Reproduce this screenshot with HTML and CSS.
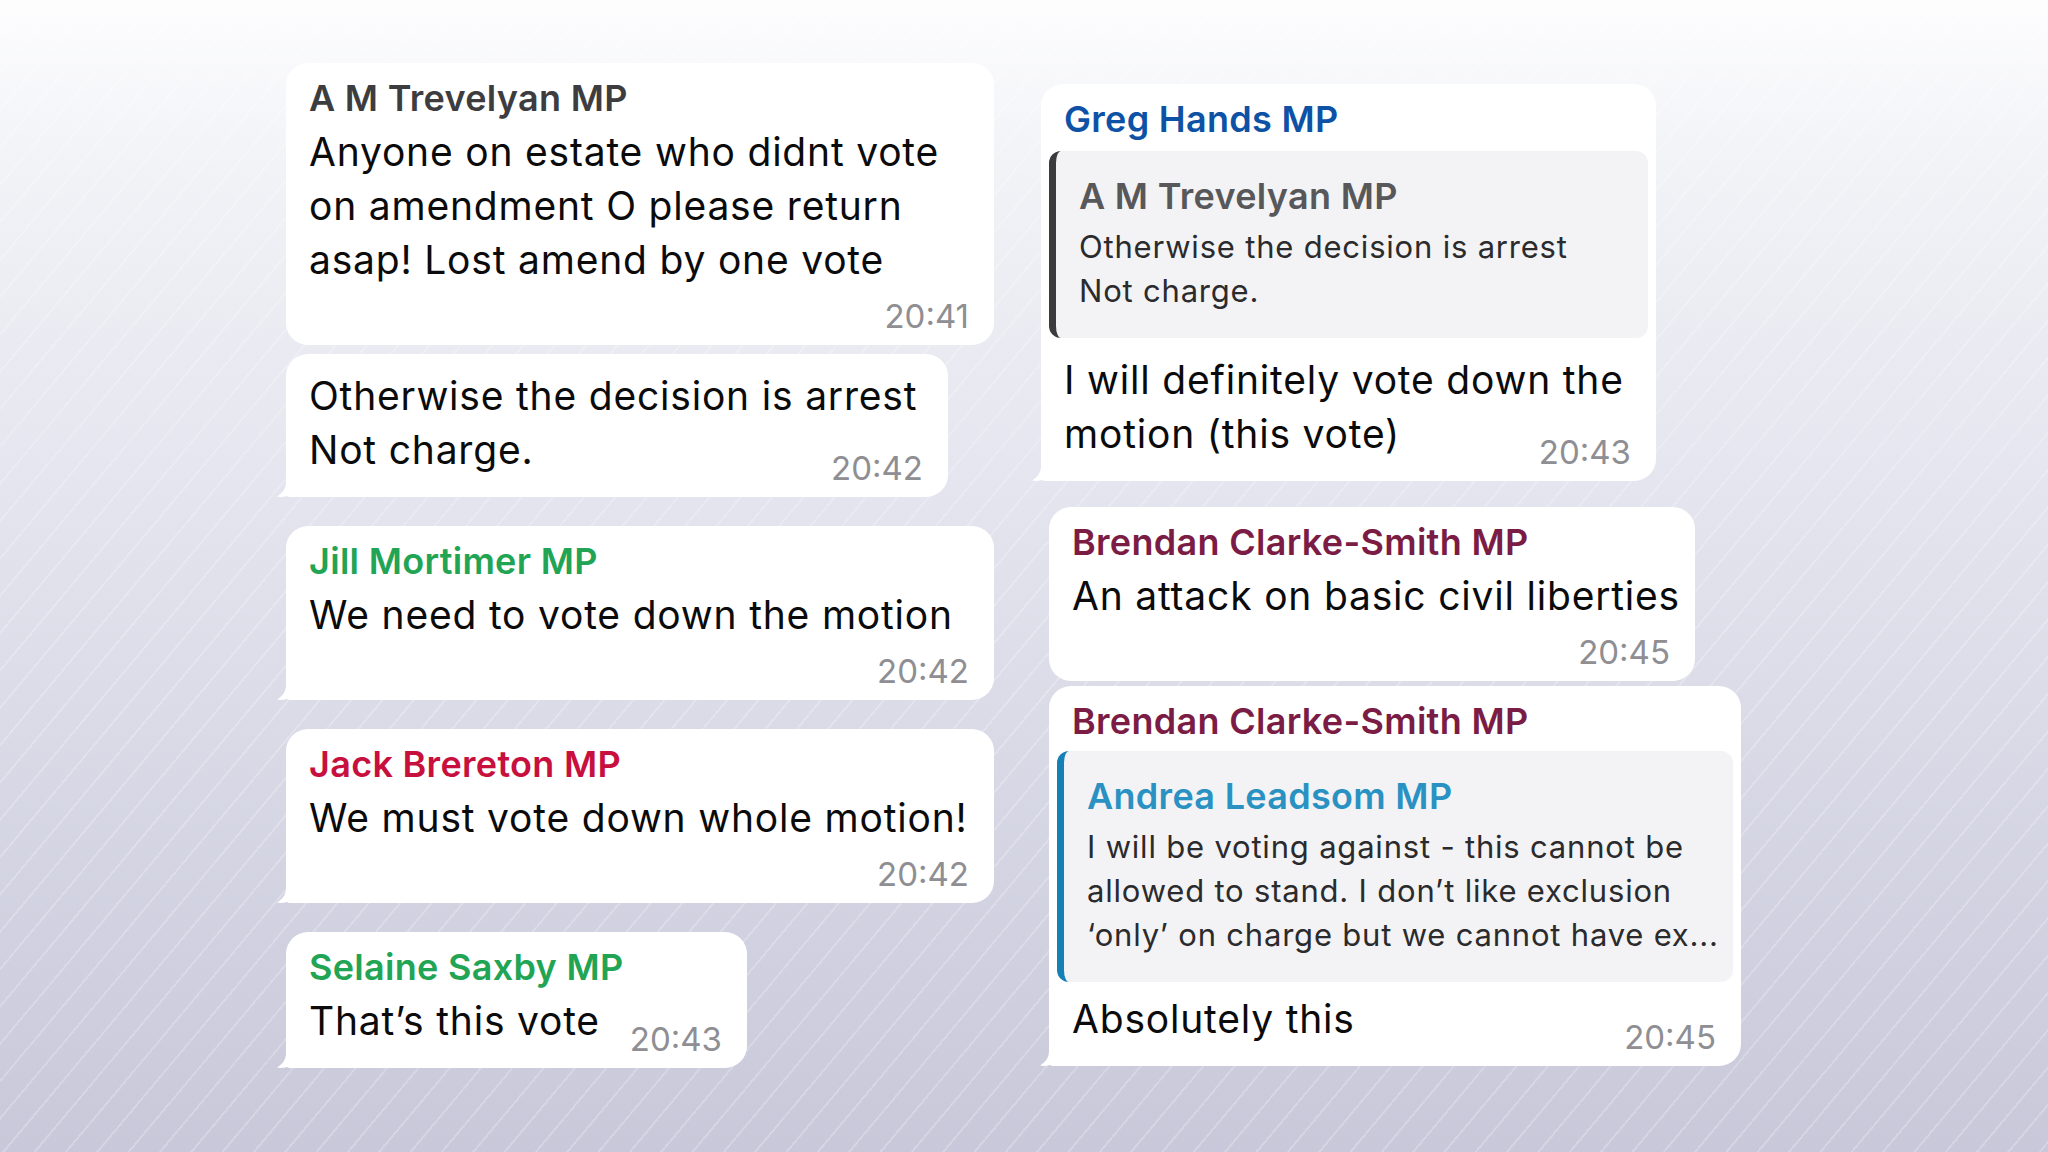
FILE: index.html
```html
<!DOCTYPE html>
<html lang="en">

<head>
    <meta charset="UTF-8">
    <meta name="viewport" content="width=device-width, initial-scale=1.0">
    <title>Group chat</title>
    <link rel="stylesheet" href="styles.css">
</head>

<body>
    <main class="chat">
        <section class="col col-left">
            <div class="bubble b-wide">
                <div class="name grey">A M Trevelyan MP</div>
                <div class="text">Anyone on estate who didnt vote<br>on amendment O please return<br>asap! Lost amend by one vote</div>
                <div class="time">20:41</div>
            </div>
            <div class="bubble b-mid tail">
                <div class="msg">
                    <div class="text">Otherwise the decision is arrest<br>Not charge.</div>
                    <div class="time">20:42</div>
                </div>
            </div>
            <div class="bubble b-wide tail gap">
                <div class="name green">Jill Mortimer MP</div>
                <div class="text">We need to vote down the motion</div>
                <div class="time">20:42</div>
            </div>
            <div class="bubble b-wide tail gap">
                <div class="name red">Jack Brereton MP</div>
                <div class="text">We must vote down whole motion!</div>
                <div class="time">20:42</div>
            </div>
            <div class="bubble b-small tail gap">
                <div class="name green">Selaine Saxby MP</div>
                <div class="msg">
                    <div class="text">That’s this vote</div>
                    <div class="time">20:43</div>
                </div>
            </div>
        </section>

        <section class="col col-right">
            <div class="bubble b-greg tail">
                <div class="name blue">Greg Hands MP</div>
                <div class="quote">
                    <div class="name grey-light">A M Trevelyan MP</div>
                    <div class="quote-text">Otherwise the decision is arrest<br>Not charge.</div>
                </div>
                <div class="msg">
                    <div class="text">I will definitely vote down the<br>motion (this vote)</div>
                    <div class="time">20:43</div>
                </div>
            </div>
            <div class="bubble b-brendan">
                <div class="name maroon">Brendan Clarke-Smith MP</div>
                <div class="text">An attack on basic civil liberties</div>
                <div class="time">20:45</div>
            </div>
            <div class="bubble b-brendan-2 tail">
                <div class="name maroon">Brendan Clarke-Smith MP</div>
                <div class="quote quote-blue">
                    <div class="name sky">Andrea Leadsom MP</div>
                    <div class="quote-text">I will be voting against - this cannot be<br>allowed to stand. I don’t like exclusion<br>‘only’ on charge but we cannot have ex...</div>
                </div>
                <div class="msg">
                    <div class="text">Absolutely this</div>
                    <div class="time">20:45</div>
                </div>
            </div>
        </section>
    </main>
</body>

</html>
```

FILE: styles.css
```css
body {
    margin: 0;
    width: 2048px;
    height: 1152px;
    overflow: hidden;
    font-family: Inter, "Liberation Sans", sans-serif;
    color: #0b0b0b;
    background:
        repeating-linear-gradient(130deg, transparent 0 22px, rgba(255, 255, 255, 0.22) 22px 24px),
        linear-gradient(180deg, #fdfdfe 0%, #f2f3f7 14%, #e4e5ee 42%, #d6d7e4 70%, #c8c8da 100%);
}
.chat {
    display: flex;
    align-items: flex-start;
    gap: 47px;
    padding: 63px 0 0 286px;
}
.col {
    display: flex;
    flex-direction: column;
    align-items: flex-start;
}
.col-right {
    padding-top: 21px;
}
.bubble {
    position: relative;
    box-sizing: border-box;
    background: #fff;
    border-radius: 22px;
    padding: 15px 25px 9px 23px;
}
.bubble.tail {
    border-bottom-left-radius: 4px;
}
.bubble.tail::before {
    content: "";
    position: absolute;
    left: -9px;
    bottom: 0;
    width: 20px;
    height: 24px;
    background: #fff;
    clip-path: path("M9 0 V9 C9 15 6 20 0 23.5 C5 24.5 10 23.5 13.5 21.5 C15.5 23 18 24 20 24 V0 Z");
}
.gap {
    margin-top: 29px;
}
.b-wide { width: 708px; }
.b-mid { width: 662px; margin-top: 9px; }
.b-small { width: 461px; }
.b-greg { width: 615px; }
.b-brendan { width: 646px; margin-left: 8px; margin-top: 26px; }
.b-brendan-2 { width: 692px; margin-left: 8px; margin-top: 5px; }

.name {
    font-size: 36px;
    font-weight: 600;
    line-height: 40px;
    letter-spacing: 0.3px;
    margin-bottom: 7px;
    white-space: nowrap;
}
.grey { color: #3d3d3f; }
.grey-light { color: #58585a; }
.green { color: #22a455; }
.red { color: #c8103e; }
.blue { color: #0e52a6; }
.maroon { color: #7b1c45; }
.sky { color: #2a91c3; }

.text {
    font-size: 39px;
    line-height: 54px;
    letter-spacing: 0.8px;
    white-space: nowrap;
}
.time {
    font-size: 33px;
    line-height: 40px;
    color: #8e8e93;
    text-align: right;
    margin-top: 9px;
}
/* time sits in the corner of the last text line */
.msg {
    display: grid;
}
.msg > .text,
.msg > .time {
    grid-area: 1 / 1;
}
.msg > .text {
    padding-bottom: 11px;
}
.msg > .time {
    justify-self: end;
    align-self: end;
    margin-top: 0;
}
.quote {
    margin: 12px -17px 15px -15px;
    padding: 25px 20px 25px 23px;
    background: #f3f3f5;
    border-left: 7px solid #3b3b3d;
    border-radius: 12px;
}
.quote .name {
    margin-bottom: 0;
}
.quote-blue {
    margin-top: 10px;
    margin-bottom: 10px;
    border-left-color: #1480b6;
}
.quote-text {
    margin-top: 9px;
    font-size: 31px;
    line-height: 44px;
    letter-spacing: 0.8px;
    color: #2b2b2d;
    white-space: nowrap;
}
```
